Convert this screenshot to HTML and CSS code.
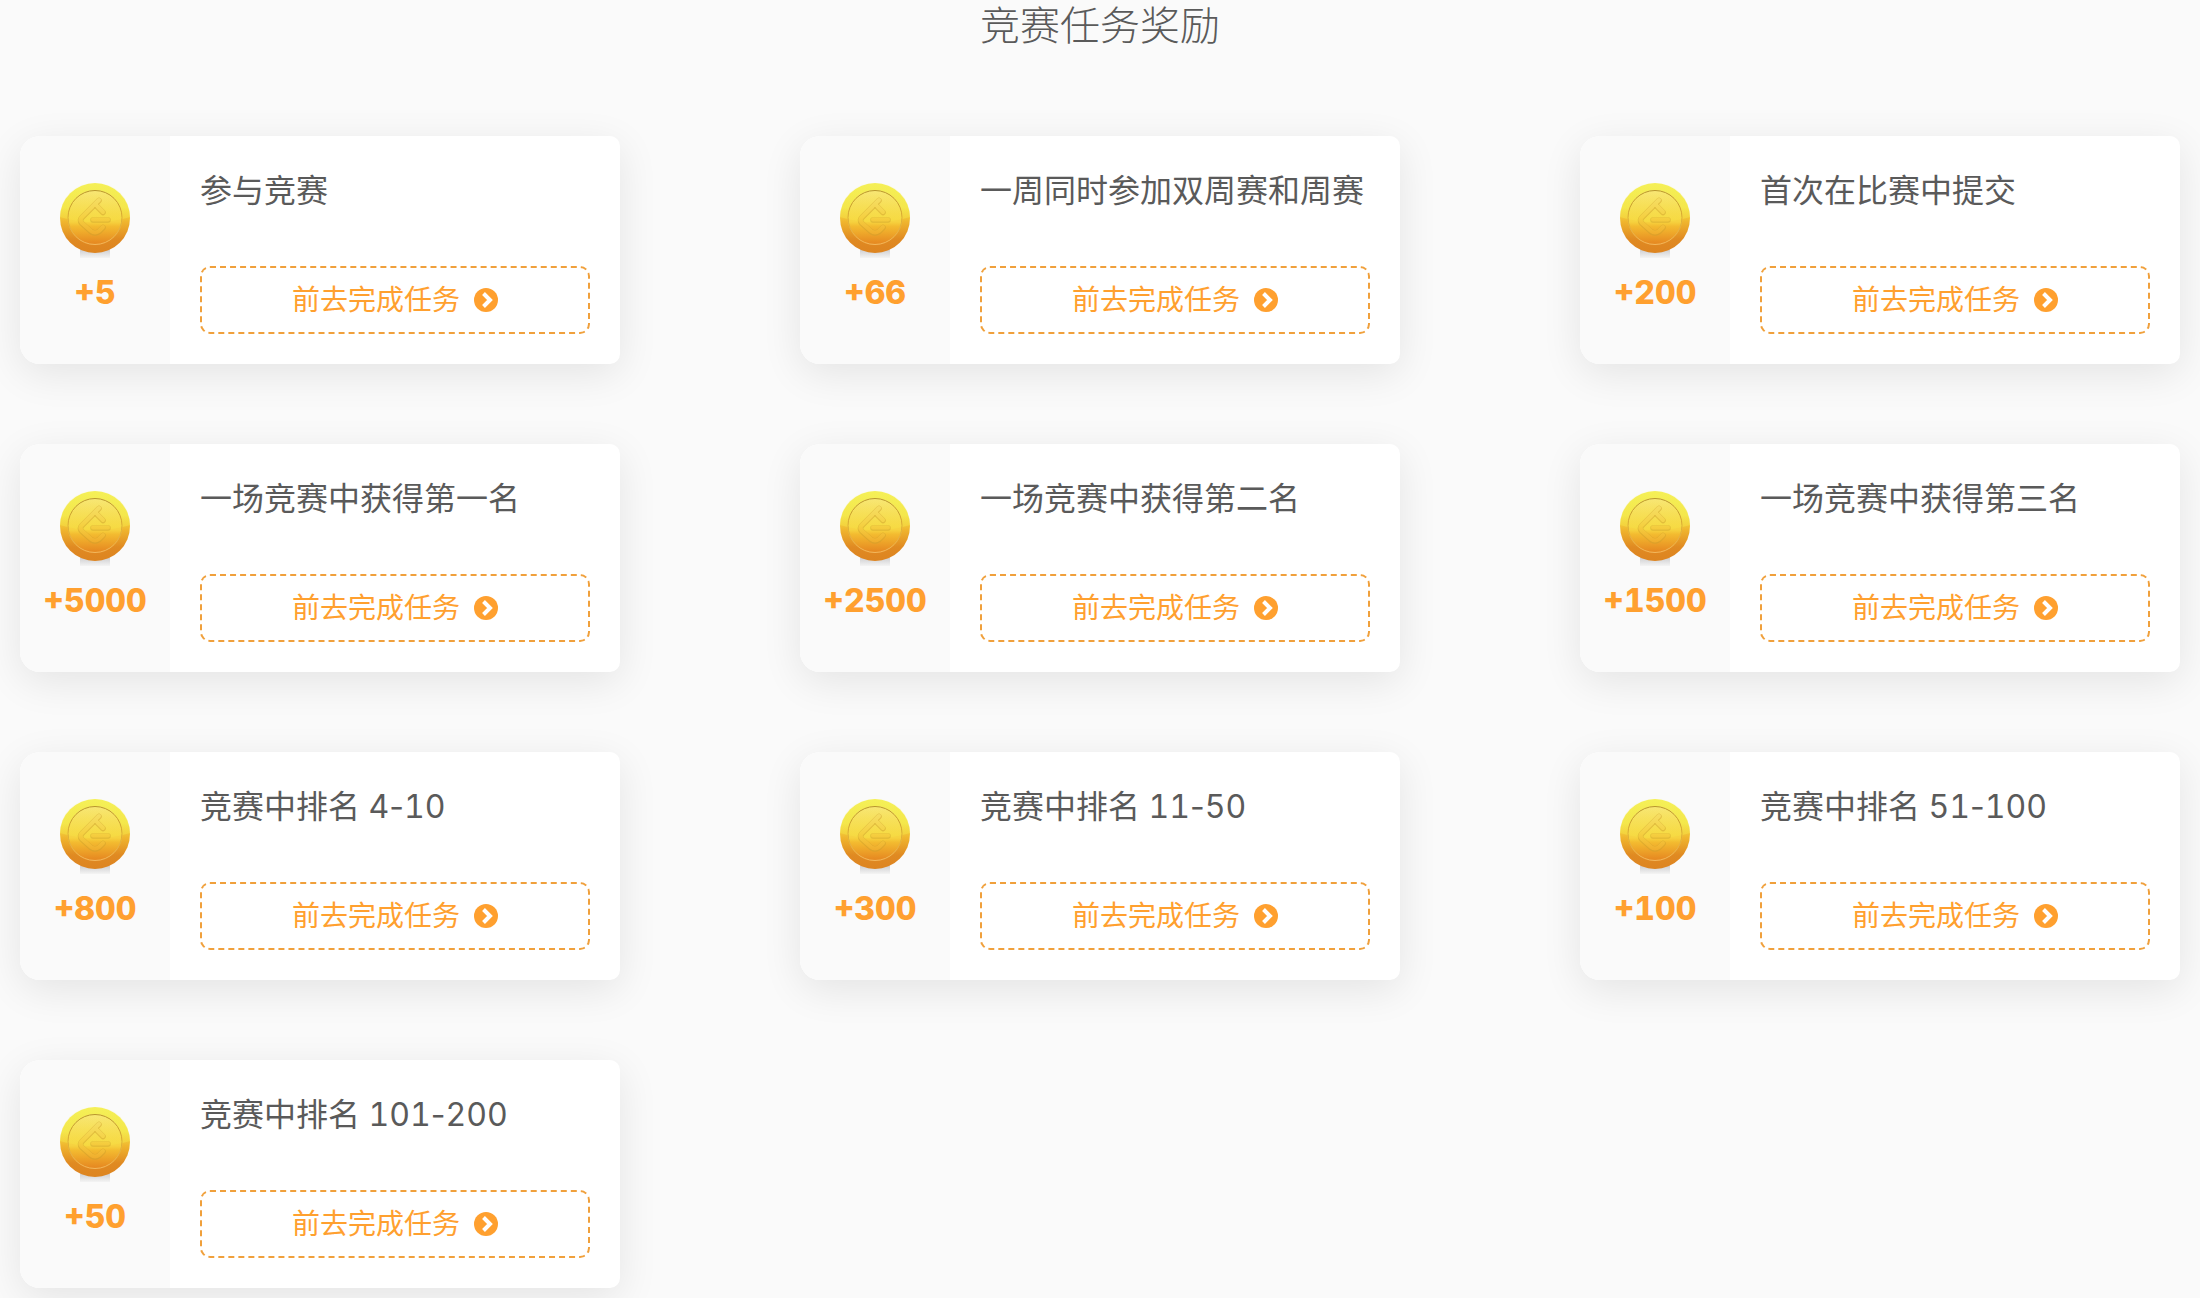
FILE: index.html
```html
<!DOCTYPE html>
<html lang="zh-CN">
<head>
  <meta charset="UTF-8">
  <meta name="viewport" content="width=device-width, initial-scale=1.0">
  <title>竞赛任务奖励</title>
  <link rel="stylesheet" href="styles.css">
</head>
<body>
  <svg class="sprite" width="0" height="0" aria-hidden="true">
    <defs>
      <linearGradient id="rim" x1="0" y1="0" x2="0" y2="1">
        <stop offset="0" stop-color="#f5f057"/>
        <stop offset="0.35" stop-color="#f3e84c"/>
        <stop offset="0.55" stop-color="#f0b62e"/>
        <stop offset="0.8" stop-color="#e08a22"/>
        <stop offset="1" stop-color="#dd8420"/>
      </linearGradient>
      <linearGradient id="face" x1="0" y1="0" x2="0" y2="1">
        <stop offset="0" stop-color="#f8e67c"/>
        <stop offset="0.58" stop-color="#f6d23e"/>
        <stop offset="0.66" stop-color="#f3bb30"/>
        <stop offset="0.95" stop-color="#e78c22"/>
        <stop offset="1" stop-color="#e58a22"/>
      </linearGradient>
      <linearGradient id="ring" x1="0" y1="0" x2="0" y2="1">
        <stop offset="0" stop-color="#b8962a"/>
        <stop offset="0.5" stop-color="#d9a932"/>
        <stop offset="1" stop-color="#f2b75c"/>
      </linearGradient>
      <linearGradient id="gloss" x1="0" y1="0" x2="0" y2="1">
        <stop offset="0" stop-color="#f5f057" stop-opacity="0"/>
        <stop offset="1" stop-color="#f6de42" stop-opacity="0.6"/>
      </linearGradient>
      <linearGradient id="mark" gradientUnits="userSpaceOnUse" x1="0" y1="14" x2="0" y2="52">
        <stop offset="0" stop-color="#f5de66"/>
        <stop offset="0.55" stop-color="#f5d040"/>
        <stop offset="1" stop-color="#f0ab2c"/>
      </linearGradient>
      <linearGradient id="base" x1="0" y1="0" x2="0" y2="1">
        <stop offset="0.35" stop-color="#d4d4d6"/>
        <stop offset="1" stop-color="#f4f4f4"/>
      </linearGradient>
      <g id="mark-lines">
        <path d="M39 17 L22 34 Q19 37 22 40 L31 48 Q35 51 39 48 L43 44"/>
        <path d="M36 22 L43 29"/>
        <path d="M33 36.500 H48"/>
      </g>
    </defs>
    <symbol id="coin" viewBox="0 0 70 76">
      <rect x="20" y="64" width="30" height="11" fill="url(#base)"/>
      <circle cx="35" cy="35" r="35" fill="url(#rim)"/>
      <circle cx="35" cy="34.500" r="27.500" fill="url(#face)"/>
      <path d="M0 34 A35 35 0 0 1 70 34 Q54 39 35 39 Q16 39 0 34 Z" fill="url(#gloss)"/>
      <circle cx="35" cy="34.500" r="27" fill="none" stroke="url(#ring)" stroke-width="1"/>
      <g fill="none" stroke-linecap="round" stroke-linejoin="round">
        <use href="#mark-lines" stroke="#cda02b" stroke-width="5.500" stroke-opacity="0.5" transform="translate(0 0.500)"/>
        <use href="#mark-lines" stroke="url(#mark)" stroke-width="4"/>
      </g>
    </symbol>
    <symbol id="arrow" viewBox="0 0 24 24">
      <circle cx="12" cy="12" r="12" fill="currentColor"/>
      <path d="M9.500 5.500 L16 12 L9.500 18.500" fill="none" stroke="#fff" stroke-width="4"/>
    </symbol>
  </svg>

  <h2 class="heading">竞赛任务奖励</h2>

  <div class="tasks">
    <div class="card">
      <div class="reward">
        <svg class="coin"><use href="#coin"/></svg>
        <span class="points">+5</span>
      </div>
      <div class="content">
        <h3 class="title">参与竞赛</h3>
        <a class="go" href="#">前去完成任务 <svg class="arrow"><use href="#arrow"/></svg></a>
      </div>
    </div>

    <div class="card">
      <div class="reward">
        <svg class="coin"><use href="#coin"/></svg>
        <span class="points">+66</span>
      </div>
      <div class="content">
        <h3 class="title">一周同时参加双周赛和周赛</h3>
        <a class="go" href="#">前去完成任务 <svg class="arrow"><use href="#arrow"/></svg></a>
      </div>
    </div>

    <div class="card">
      <div class="reward">
        <svg class="coin"><use href="#coin"/></svg>
        <span class="points">+200</span>
      </div>
      <div class="content">
        <h3 class="title">首次在比赛中提交</h3>
        <a class="go" href="#">前去完成任务 <svg class="arrow"><use href="#arrow"/></svg></a>
      </div>
    </div>

    <div class="card">
      <div class="reward">
        <svg class="coin"><use href="#coin"/></svg>
        <span class="points">+5000</span>
      </div>
      <div class="content">
        <h3 class="title">一场竞赛中获得第一名</h3>
        <a class="go" href="#">前去完成任务 <svg class="arrow"><use href="#arrow"/></svg></a>
      </div>
    </div>

    <div class="card">
      <div class="reward">
        <svg class="coin"><use href="#coin"/></svg>
        <span class="points">+2500</span>
      </div>
      <div class="content">
        <h3 class="title">一场竞赛中获得第二名</h3>
        <a class="go" href="#">前去完成任务 <svg class="arrow"><use href="#arrow"/></svg></a>
      </div>
    </div>

    <div class="card">
      <div class="reward">
        <svg class="coin"><use href="#coin"/></svg>
        <span class="points">+1500</span>
      </div>
      <div class="content">
        <h3 class="title">一场竞赛中获得第三名</h3>
        <a class="go" href="#">前去完成任务 <svg class="arrow"><use href="#arrow"/></svg></a>
      </div>
    </div>

    <div class="card">
      <div class="reward">
        <svg class="coin"><use href="#coin"/></svg>
        <span class="points">+800</span>
      </div>
      <div class="content">
        <h3 class="title">竞赛中排名 4<span class="dash">-</span>10</h3>
        <a class="go" href="#">前去完成任务 <svg class="arrow"><use href="#arrow"/></svg></a>
      </div>
    </div>

    <div class="card">
      <div class="reward">
        <svg class="coin"><use href="#coin"/></svg>
        <span class="points">+300</span>
      </div>
      <div class="content">
        <h3 class="title">竞赛中排名 11<span class="dash">-</span>50</h3>
        <a class="go" href="#">前去完成任务 <svg class="arrow"><use href="#arrow"/></svg></a>
      </div>
    </div>

    <div class="card">
      <div class="reward">
        <svg class="coin"><use href="#coin"/></svg>
        <span class="points">+100</span>
      </div>
      <div class="content">
        <h3 class="title">竞赛中排名 51<span class="dash">-</span>100</h3>
        <a class="go" href="#">前去完成任务 <svg class="arrow"><use href="#arrow"/></svg></a>
      </div>
    </div>

    <div class="card">
      <div class="reward">
        <svg class="coin"><use href="#coin"/></svg>
        <span class="points">+50</span>
      </div>
      <div class="content">
        <h3 class="title">竞赛中排名 101<span class="dash">-</span>200</h3>
        <a class="go" href="#">前去完成任务 <svg class="arrow"><use href="#arrow"/></svg></a>
      </div>
    </div>
  </div>
</body>
</html>
```

FILE: styles.css
```css
* {
  box-sizing: border-box;
}
body {
  margin: 0;
  background-color: #fafafa;
  color: #5a5a5a;
  font-family: Inter, "Noto Sans CJK SC", sans-serif;
  font-variant-numeric: tabular-nums;
}
.sprite {
  position: absolute;
}
.heading {
  margin: 0 0 84px;
  font-size: 40px;
  font-weight: 300;
  line-height: 52px;
  text-align: center;
}
.tasks {
  display: grid;
  grid-template-columns: repeat(3, 1fr);
  gap: 80px 180px;
  padding: 0 20px 10px;
}
.card {
  display: flex;
  border-radius: 20px 10px 10px 20px;
  background: #fff;
  box-shadow: 0 10px 40px rgba(0, 0, 0, 0.09);
  overflow: hidden;
}
.reward {
  display: flex;
  flex-direction: column;
  align-items: center;
  width: 150px;
  padding-top: 47px;
  background: #fafafa;
}
.coin {
  width: 70px;
  height: 76px;
}
.points {
  margin-top: 14px;
  color: #ffa02f;
  font-size: 32px;
  font-weight: 800;
  line-height: 40px;
}
.content {
  flex: 1;
  padding: 31px 30px 30px;
}
.title {
  margin: 0 0 51px;
  font-size: 32px;
  font-weight: 400;
  line-height: 48px;
}
/* the tabular hyphen is as wide as a digit */
.dash {
  font-variant-numeric: normal;
}
.go {
  display: flex;
  align-items: center;
  justify-content: center;
  gap: 14px;
  height: 68px;
  border: 2px dashed #f0a03c;
  border-radius: 10px;
  color: #ffa02f;
  font-size: 28px;
  line-height: 40px;
  text-decoration: none;
}
.arrow {
  width: 24px;
  height: 24px;
}
```
